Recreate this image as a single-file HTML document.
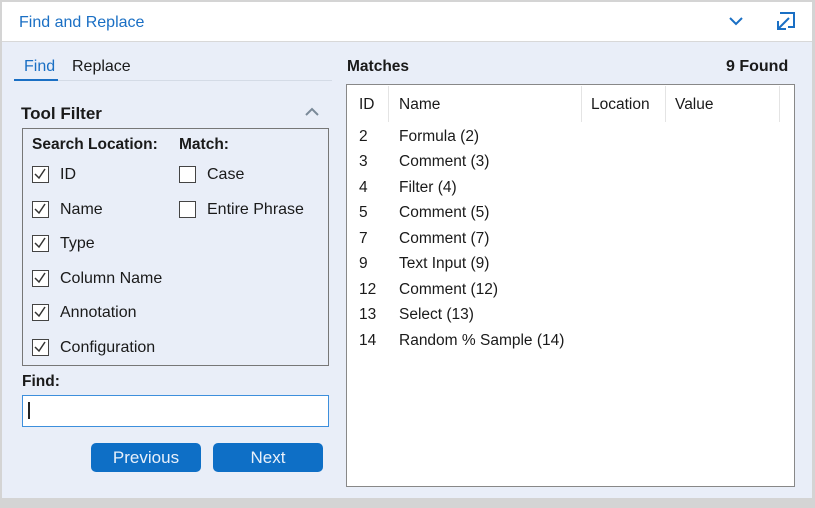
<!DOCTYPE html>
<html><head><style>
*{box-sizing:border-box;margin:0;padding:0}
body{width:815px;height:508px;background:#d4d4d4;font-family:"Liberation Sans",sans-serif;font-size:15px;color:#1a1a1a;position:relative;overflow:hidden}
.win{position:absolute;left:2px;top:2px;width:810px;height:496px;background:#e9eef8}
.title{position:absolute;left:0;top:0;width:810px;height:40px;background:#fff;border-bottom:1px solid #d8d8d8}
.title span{position:absolute;left:17px;top:12px;color:#1a6fc4;font-size:16px}
.abs{position:absolute}
.cb{position:absolute;width:17px;height:17px;border:1.5px solid #444;background:#fff}
.cb svg{position:absolute;left:1px;top:1px}
.lbl{position:absolute;font-size:16px}
.btn{position:absolute;height:29px;background:#0e6fc6;border-radius:5px;color:#e8f0fa;font-size:17px;text-align:center;line-height:29px}
.row{position:absolute;font-size:15.5px}
</style></head><body>
<div class="win">
 <div class="title"><span>Find and Replace</span>
  <svg class="abs" style="left:726px;top:13px" width="16" height="12"><path d="M2 3 L8 9 L14 3" stroke="#1a6fc4" stroke-width="2" fill="none"/></svg>
  <svg class="abs" style="left:772px;top:9px" width="22" height="22"><path d="M6 2 H20 V16 H14" stroke="#1a6fc4" stroke-width="2" fill="none"/><path d="M15 7 L4 18 M4 10 V18 H12" stroke="#1a6fc4" stroke-width="2" fill="none"/></svg>
 </div>
 <div class="lbl" style="left:22px;top:56px;color:#1a6fc4">Find</div>
 <div class="lbl" style="left:70px;top:56px">Replace</div>
 <div class="abs" style="left:12px;top:77px;width:44px;height:2px;background:#1a6fc4"></div>
 <div class="abs" style="left:56px;top:78px;width:274px;height:1px;background:#d4dbe6"></div>
 <div class="lbl" style="left:19px;top:102px;font-weight:bold;font-size:17px">Tool Filter</div>
 <svg class="abs" style="left:302px;top:104px" width="16" height="12"><path d="M2 9 L8 3 L14 9" stroke="#7a8a99" stroke-width="2" fill="none"/></svg>
 <div class="abs" style="left:20px;top:126px;width:307px;height:238px;border:1.5px solid #777"></div>
 <div class="lbl" style="left:30px;top:134px;font-weight:bold;font-size:15.5px">Search Location:</div>
 <div class="lbl" style="left:177px;top:134px;font-weight:bold;font-size:15.5px">Match:</div>
 <div class="cb" style="left:30px;top:164px"><svg width="12" height="12"><path d="M1 6 L5 10 L11 1" stroke="#333" stroke-width="1.5" fill="none"/></svg></div><div class="lbl" style="left:58px;top:164px">ID</div>
 <div class="cb" style="left:30px;top:199px"><svg width="12" height="12"><path d="M1 6 L5 10 L11 1" stroke="#333" stroke-width="1.5" fill="none"/></svg></div><div class="lbl" style="left:58px;top:199px">Name</div>
 <div class="cb" style="left:30px;top:233px"><svg width="12" height="12"><path d="M1 6 L5 10 L11 1" stroke="#333" stroke-width="1.5" fill="none"/></svg></div><div class="lbl" style="left:58px;top:233px">Type</div>
 <div class="cb" style="left:30px;top:268px"><svg width="12" height="12"><path d="M1 6 L5 10 L11 1" stroke="#333" stroke-width="1.5" fill="none"/></svg></div><div class="lbl" style="left:58px;top:268px">Column Name</div>
 <div class="cb" style="left:30px;top:302px"><svg width="12" height="12"><path d="M1 6 L5 10 L11 1" stroke="#333" stroke-width="1.5" fill="none"/></svg></div><div class="lbl" style="left:58px;top:302px">Annotation</div>
 <div class="cb" style="left:30px;top:337px"><svg width="12" height="12"><path d="M1 6 L5 10 L11 1" stroke="#333" stroke-width="1.5" fill="none"/></svg></div><div class="lbl" style="left:58px;top:337px">Configuration</div>
 <div class="cb" style="left:177px;top:164px"></div><div class="lbl" style="left:205px;top:164px">Case</div>
 <div class="cb" style="left:177px;top:199px"></div><div class="lbl" style="left:205px;top:199px">Entire Phrase</div>
 <div class="lbl" style="left:20px;top:371px;font-weight:bold;font-size:15.5px">Find:</div>
 <div class="abs" style="left:20px;top:393px;width:307px;height:32px;background:#fff;border:1.5px solid #3d8fdc"></div>
 <div class="abs" style="left:26px;top:400px;width:1.5px;height:17px;background:#222"></div>
 <div class="btn" style="left:89px;top:441px;width:110px">Previous</div>
 <div class="btn" style="left:211px;top:441px;width:110px">Next</div>
 <div class="lbl" style="left:345px;top:56px;font-weight:bold;font-size:15.5px">Matches</div>
 <div class="lbl" style="left:724px;top:56px;font-weight:bold;font-size:16px">9 Found</div>
 <div class="abs" style="left:344px;top:82px;width:449px;height:403px;background:#fff;border:1px solid #888"></div>
 <div class="abs" style="left:386px;top:84px;width:1px;height:36px;background:#e4e4e4"></div>
 <div class="abs" style="left:579px;top:84px;width:1px;height:36px;background:#e4e4e4"></div>
 <div class="abs" style="left:663px;top:84px;width:1px;height:36px;background:#e4e4e4"></div>
 <div class="abs" style="left:777px;top:84px;width:1px;height:36px;background:#e4e4e4"></div>
 <div class="row" style="left:357px;top:94px">ID</div>
 <div class="row" style="left:397px;top:94px">Name</div>
 <div class="row" style="left:589px;top:94px">Location</div>
 <div class="row" style="left:673px;top:94px">Value</div>
 <div class="row" style="left:357px;top:126px">2</div><div class="row" style="left:397px;top:126px">Formula (2)</div>
 <div class="row" style="left:357px;top:151px">3</div><div class="row" style="left:397px;top:151px">Comment (3)</div>
 <div class="row" style="left:357px;top:177px">4</div><div class="row" style="left:397px;top:177px">Filter (4)</div>
 <div class="row" style="left:357px;top:202px">5</div><div class="row" style="left:397px;top:202px">Comment (5)</div>
 <div class="row" style="left:357px;top:228px">7</div><div class="row" style="left:397px;top:228px">Comment (7)</div>
 <div class="row" style="left:357px;top:253px">9</div><div class="row" style="left:397px;top:253px">Text Input (9)</div>
 <div class="row" style="left:357px;top:279px">12</div><div class="row" style="left:397px;top:279px">Comment (12)</div>
 <div class="row" style="left:357px;top:304px">13</div><div class="row" style="left:397px;top:304px">Select (13)</div>
 <div class="row" style="left:357px;top:330px">14</div><div class="row" style="left:397px;top:330px">Random % Sample (14)</div>
</div>
</body></html>
